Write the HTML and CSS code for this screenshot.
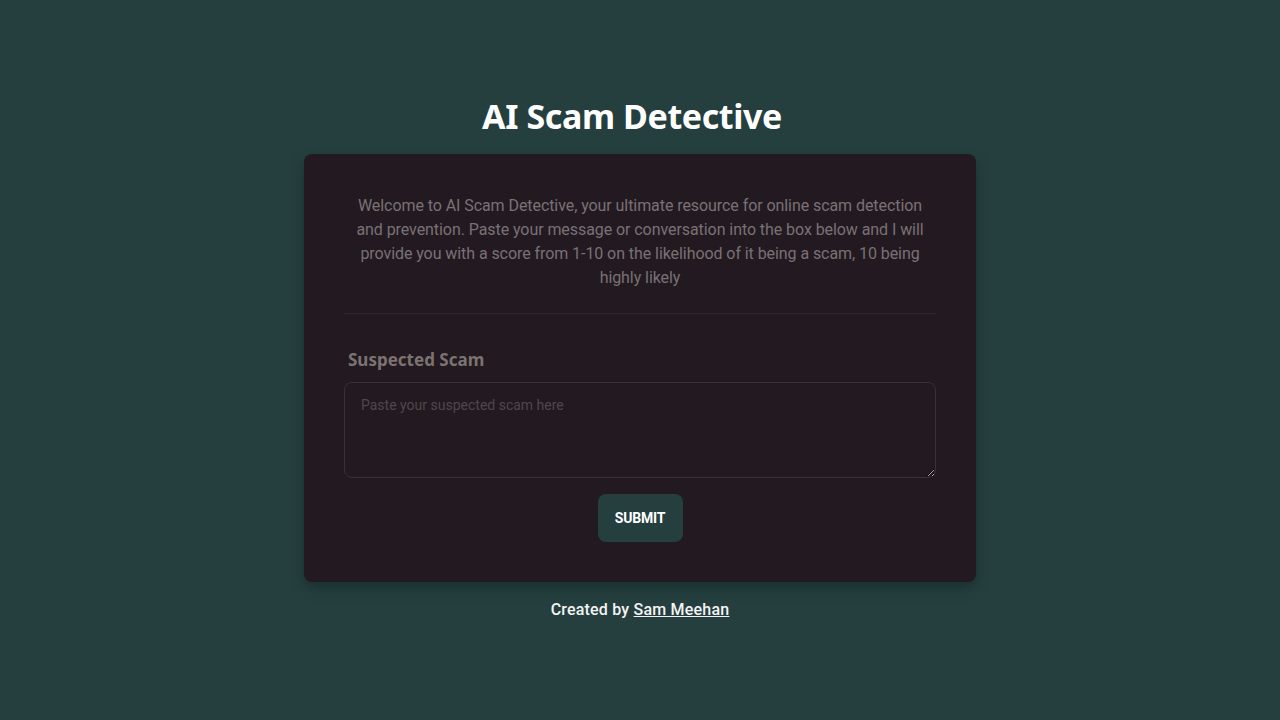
FILE: index.html
```html
<!DOCTYPE html>
<html lang="en">
<head>
<meta charset="utf-8">
<title>AI Scam Detective</title>
<link rel="stylesheet" href="styles.css">
</head>
<body>
<main class="page">
  <h1 class="title">AI Scam Detective</h1>
  <section class="card">
    <p class="intro">Welcome to AI Scam Detective, your ultimate resource for online scam detection and prevention. Paste your message or conversation into the box below and I will provide you with a score from 1-10 on the likelihood of it being a scam, 10 being highly likely</p>
    <hr class="divider">
    <form class="form">
      <label class="label" for="scam">Suspected Scam</label>
      <textarea id="scam" class="input" placeholder="Paste your suspected scam here"></textarea>
      <button type="button" class="submit">SUBMIT</button>
    </form>
  </section>
  <p class="footer">Created by <a href="#">Sam Meehan</a></p>
</main>
</body>
</html>
```
FILE: styles.css
```css
* { box-sizing: border-box; }
html, body { margin: 0; padding: 0; }
body {
  background: #253f3f;
  font-family: Roboto, "Liberation Sans", sans-serif;
  min-height: 720px;
}
.page {
  display: flex;
  flex-direction: column;
  align-items: center;
  padding-top: 94px;
}
.title {
  margin: 0 16px 16px 0;
  font-family: "Noto Sans", "Open Sans", sans-serif;
  font-weight: 700;
  font-size: 34px;
  line-height: 44px;
  color: #ffffff;
  letter-spacing: -0.4px;
}
.card {
  width: 672px;
  background: #221a20;
  border-radius: 8px;
  padding: 40px 40px 40px;
  box-shadow: 0 6px 14px rgba(0,0,0,0.25);
}
.intro {
  margin: 0;
  text-align: center;
  color: #7a7175;
  font-size: 16px;
  line-height: 24px;
  letter-spacing: -0.07px;
  padding: 0 8px;
}
.divider {
  border: 0;
  border-top: 1px solid #2e262c;
  margin: 23px 0 34px;
}
.form {
  display: flex;
  flex-direction: column;
  align-items: center;
}
.label {
  align-self: flex-start;
  margin-left: 4px;
  font-family: "Noto Sans", "Open Sans", sans-serif;
  font-weight: 700;
  font-size: 17px;
  line-height: 24px;
  color: #7d7272;
  margin-bottom: 10px;
}
.input {
  width: 100%;
  height: 96px;
  background: #221a20;
  border: 1px solid #3a3137;
  border-radius: 8px;
  padding: 14px 16px;
  font-family: Roboto, "Liberation Sans", sans-serif;
  font-size: 14px;
  color: #cfc8cc;
  resize: vertical;
  display: block;
}
.input::placeholder { color: #4f474c; }
.submit {
  margin-top: 16px;
  width: 85px;
  height: 48px;
  background: #253f3f;
  border: 0;
  border-radius: 8px;
  color: #ffffff;
  font-family: Roboto, "Liberation Sans", sans-serif;
  font-weight: 700;
  font-size: 14px;
  letter-spacing: -0.2px;
}
.footer {
  margin: 18px 0 0;
  color: #f4f4f4;
  font-size: 16px;
  font-weight: 500;
  line-height: 20px;
  letter-spacing: 0.2px;
}
.footer a { color: #f4f4f4; }
```
